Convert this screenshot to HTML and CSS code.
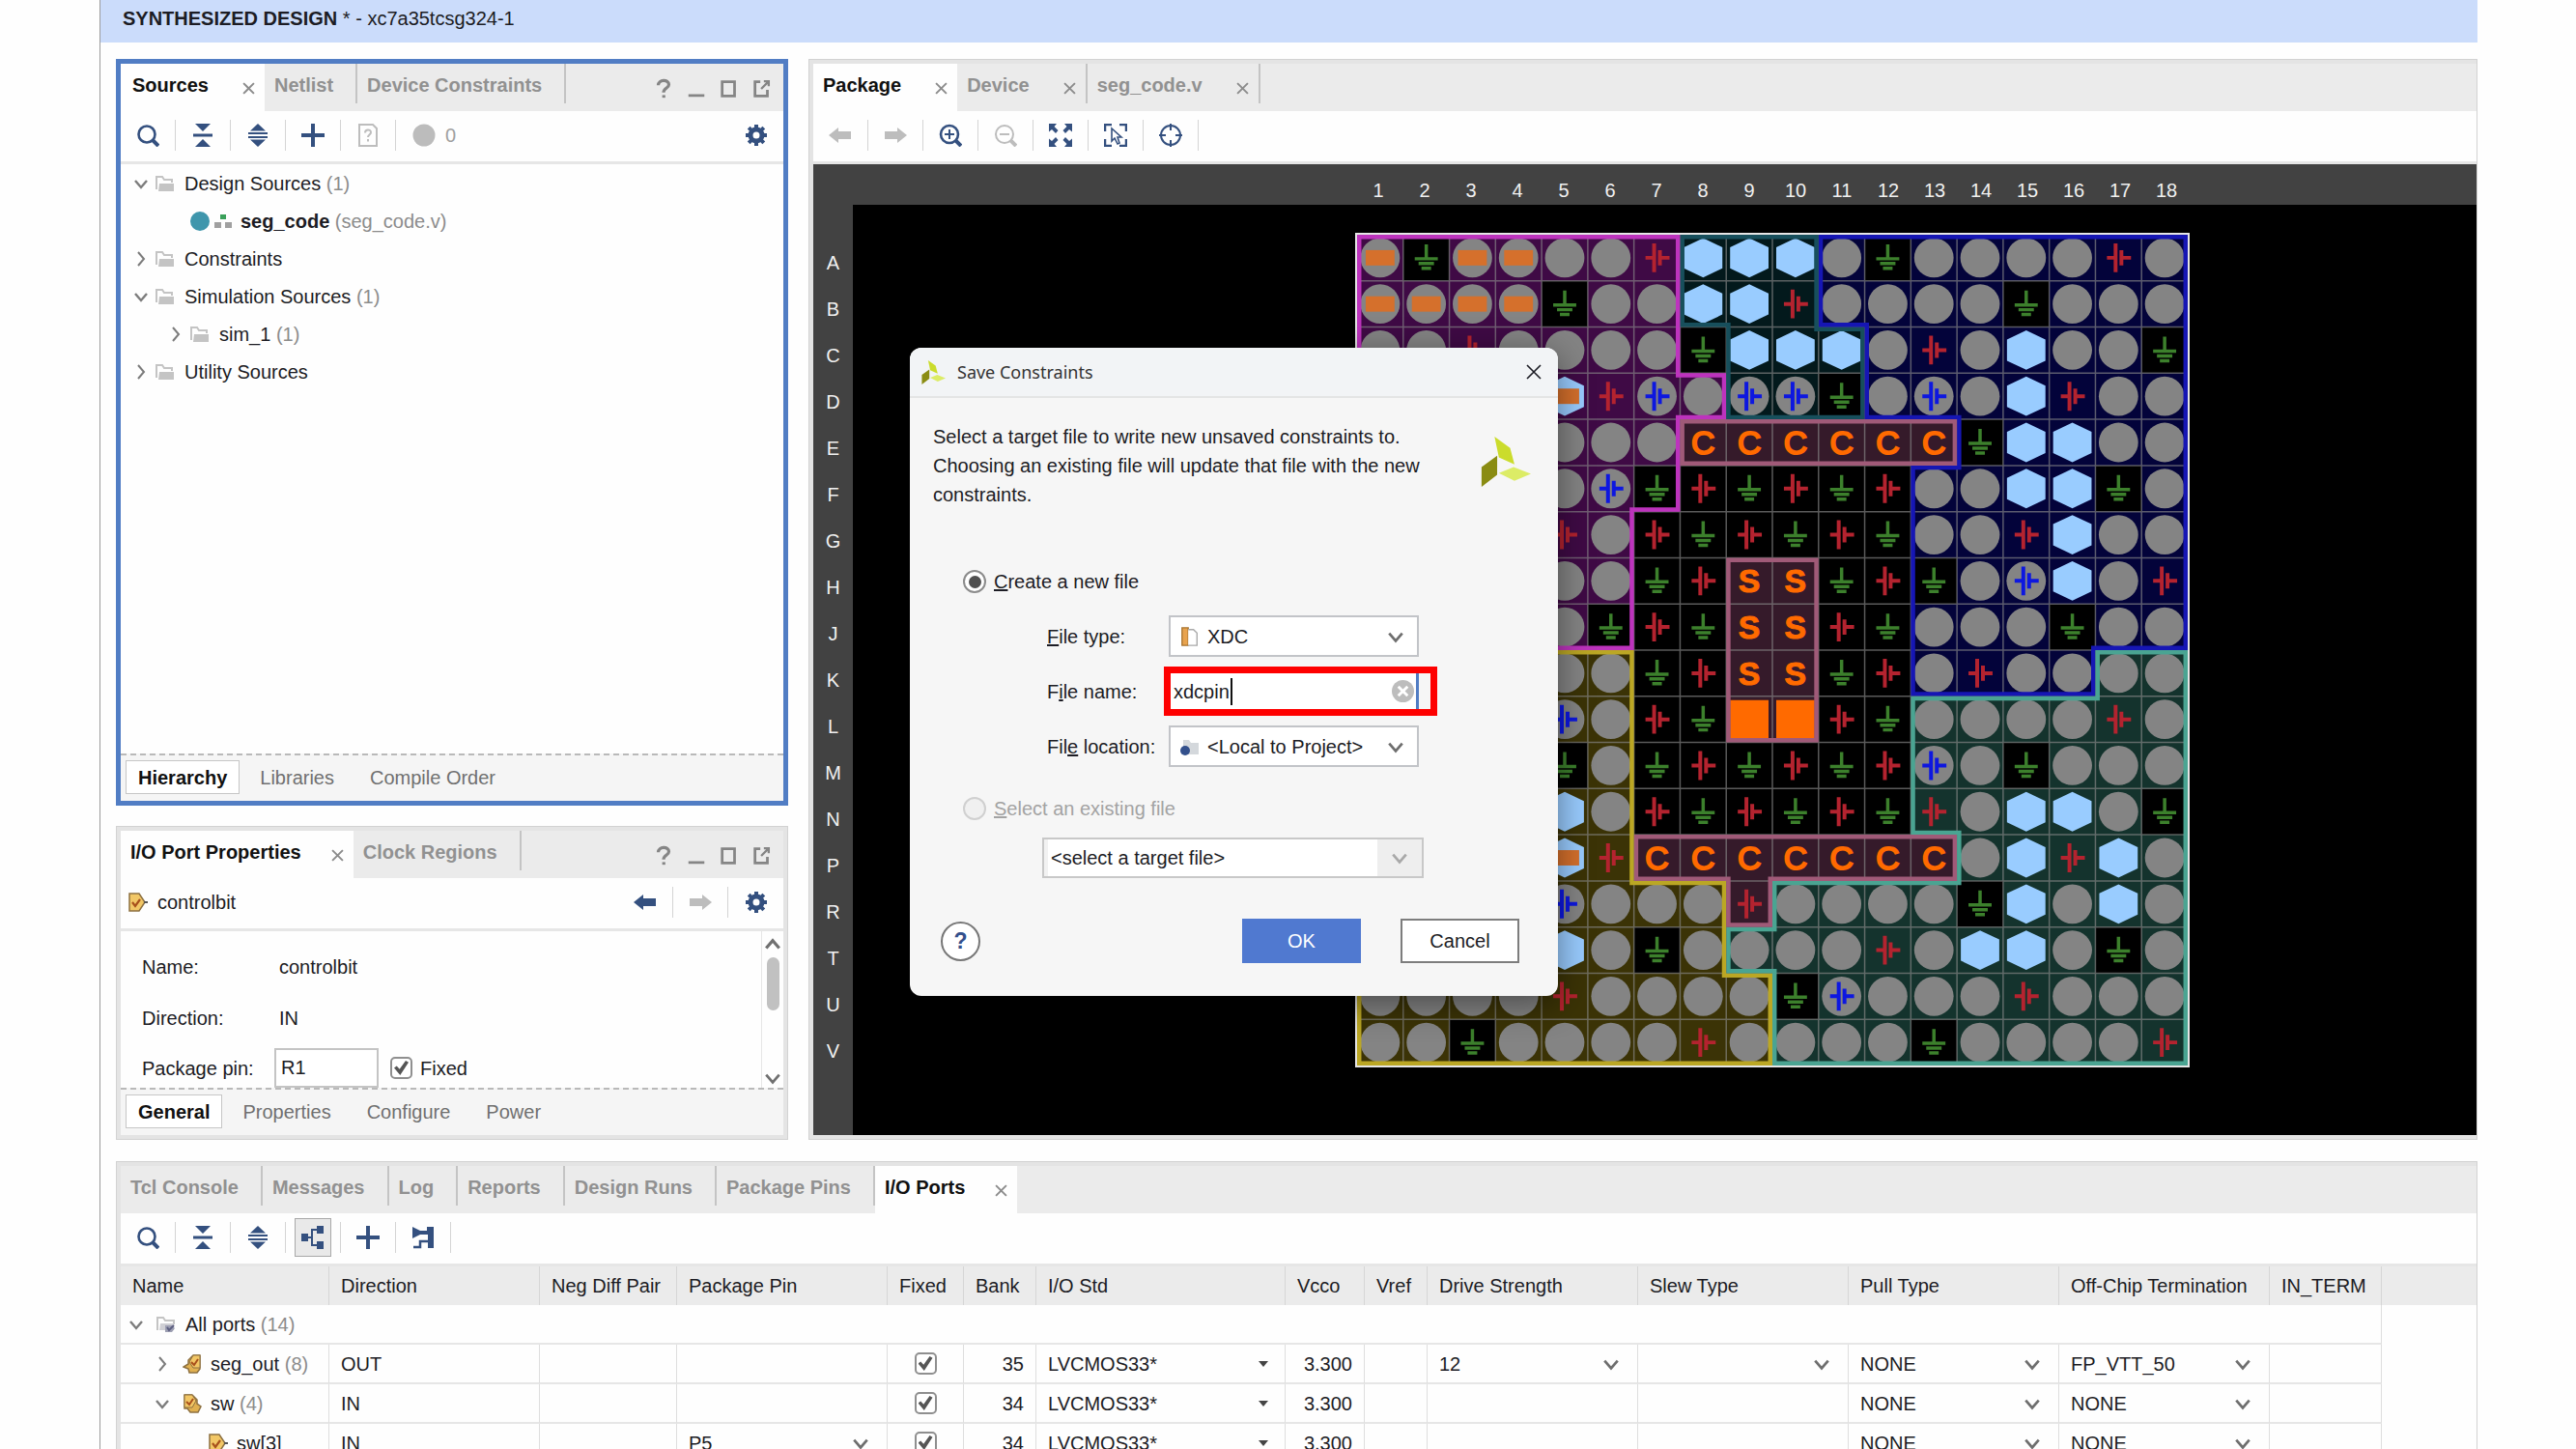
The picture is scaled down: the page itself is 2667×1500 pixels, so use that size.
FILE: index.html
```html
<!DOCTYPE html>
<html lang="en">
<head>
<meta charset="utf-8">
<title>Synthesized Design - xc7a35tcsg324-1</title>
<link rel="stylesheet" href="styles.css">
</head>
<body>
<svg class="sprite" aria-hidden="true">
  <symbol id="i-search" viewBox="0 0 24 24"><circle cx="11" cy="11" r="8.500" fill="none" stroke="currentColor" stroke-width="2.600"/><path d="M17 17l6 6" stroke="currentColor" stroke-width="4"/></symbol>
  <symbol id="i-collapse" viewBox="0 0 24 24"><path d="M4 0h16l-8 8zM4 24h16l-8-8zM2 10.500h20v3H2z" fill="currentColor"/></symbol>
  <symbol id="i-expand" viewBox="0 0 24 24"><path d="M4 7.500h16L12 0zM4 16.500h16L12 24zM2 9h20v2H2zM2 13h20v2H2z" fill="currentColor"/></symbol>
  <symbol id="i-plus" viewBox="0 0 24 24"><path d="M10 0h4v10h10v4H14v10h-4V14H0v-4h10z" fill="currentColor"/></symbol>
  <symbol id="i-doc" viewBox="0 0 24 24"><path d="M3 1h14l4 4v18H3z" fill="none" stroke="currentColor" stroke-width="2"/><path d="M9 9.500c0-4 6-4 6-.5 0 2.500-3 2.500-3 5M12 16v2.500" fill="none" stroke="currentColor" stroke-width="2"/></symbol>
  <symbol id="i-dot" viewBox="0 0 24 24"><circle cx="12" cy="12" r="11.500" fill="currentColor"/></symbol>
  <symbol id="i-gear" viewBox="0 0 24 24"><path d="M12 1v22M1 12h22M4.200 4.200l15.600 15.600M19.800 4.200L4.200 19.800" stroke="currentColor" stroke-width="4"/><circle cx="12" cy="12" r="6" fill="#fff" stroke="currentColor" stroke-width="5"/></symbol>
  <symbol id="i-left" viewBox="0 0 24 24"><path d="M0 12l10-8v4h13v8H10v4z" fill="currentColor"/></symbol>
  <symbol id="i-right" viewBox="0 0 24 24"><path d="M24 12L14 4v4H1v8h13v4z" fill="currentColor"/></symbol>
  <symbol id="i-zoomin" viewBox="0 0 24 24"><circle cx="11" cy="11" r="9" fill="none" stroke="currentColor" stroke-width="2.600"/><path d="M17 17l6 6" stroke="currentColor" stroke-width="4"/><path d="M6 11h10M11 6v10" stroke="currentColor" stroke-width="2"/></symbol>
  <symbol id="i-zoomout" viewBox="0 0 24 24"><circle cx="11" cy="11" r="9" fill="none" stroke="currentColor" stroke-width="2"/><path d="M17 17l6 6" stroke="currentColor" stroke-width="4"/><path d="M6 11h10" stroke="currentColor" stroke-width="2"/></symbol>
  <symbol id="i-fit" viewBox="0 0 24 24"><path d="M0 0h8L5.500 3l4 4-2.500 3-4-4L0 8.500zM24 0v8.500L21 6l-4 4-2.500-3 4-4L16 0zM0 24v-8.500L3 18l4-4 2.500 3-4 4L8 24zM24 24h-8l2.500-3-4-4 2.500-3 4 4 3-2.500z" fill="currentColor"/></symbol>
  <symbol id="i-fitsel" viewBox="0 0 24 24"><path d="M1 8V1h7M16 1h7v7M1 16v7h7M16 23h7v-7" fill="none" stroke="currentColor" stroke-width="2.500"/><path d="M8 5v13l3-3 3 6 2-1-2-6h4z" fill="none" stroke="currentColor" stroke-width="1.600"/></symbol>
  <symbol id="i-target" viewBox="0 0 24 24"><circle cx="12" cy="12" r="10" fill="none" stroke="currentColor" stroke-width="2"/><path d="M12 0v7M12 17v7M0 12h7M17 12h7" stroke="currentColor" stroke-width="2"/></symbol>
  <symbol id="i-tree" viewBox="0 0 24 24"><path d="M0 8h7v8H0zM16 0h7v8h-7zM16 16h7v8h-7z" fill="currentColor"/><path d="M7 12h4M16 4h-5v16h5" fill="none" stroke="currentColor" stroke-width="2"/></symbol>
  <symbol id="i-ports" viewBox="0 0 24 24"><path d="M1 1l8 4h7V1h7v22h-6V9H9l-8 4z" fill="currentColor"/><path d="M2 22h7v-6h8" fill="none" stroke="currentColor" stroke-width="2.500"/></symbol>
  <symbol id="i-help" viewBox="0 0 24 24"><path d="M6 8c0-7 12-7 12-1 0 4.500-6 4-6 9" fill="none" stroke="currentColor" stroke-width="3.500"/><path d="M10.500 19h3.500v3h-3.500z" fill="currentColor"/></symbol>
  <symbol id="i-min" viewBox="0 0 24 24"><path d="M3 18h18v3H3z" fill="currentColor"/></symbol>
  <symbol id="i-max" viewBox="0 0 24 24"><path d="M4 4h14v16H4z" fill="none" stroke="currentColor" stroke-width="3"/></symbol>
  <symbol id="i-float" viewBox="0 0 24 24"><path d="M10 4H4v16h14v-7" fill="none" stroke="currentColor" stroke-width="3"/><path d="M11 12l8-8M14 3.500h5.500V9" fill="none" stroke="currentColor" stroke-width="2.500"/></symbol>
  <symbol id="i-x" viewBox="0 0 12 12"><path d="M1 1l10 10M11 1L1 11" stroke="currentColor" stroke-width="1.800"/></symbol>
  <symbol id="i-close" viewBox="0 0 16 16"><path d="M1 1l14 14M15 1L1 15" stroke="currentColor" stroke-width="1.600"/></symbol>
  <symbol id="i-down" viewBox="0 0 16 16"><path d="M2 5l6 7 6-7" fill="none" stroke="currentColor" stroke-width="2.400"/></symbol>
  <symbol id="i-next" viewBox="0 0 16 16"><path d="M5 1l6 7-6 7" fill="none" stroke="currentColor" stroke-width="2"/></symbol>
  <symbol id="i-up" viewBox="0 0 16 16"><path d="M2 12l6-7 6 7" fill="none" stroke="currentColor" stroke-width="2.800"/></symbol>
  <symbol id="i-tri" viewBox="0 0 16 16"><path d="M3 5h10l-5 6z" fill="currentColor"/></symbol>
  <symbol id="i-folder" viewBox="0 0 20 18"><path d="M1 15V2h6l2 3h8v3" fill="none" stroke="#c4c4c4" stroke-width="2"/><path d="M4 9h15v8H3z" fill="#c4c4c4"/></symbol>
  <symbol id="i-folderports" viewBox="0 0 20 18"><path d="M1 15V2h6l2 3h9v4" fill="none" stroke="#c4c4c4" stroke-width="2"/><path d="M4 8h14v7H3z" fill="#cfcfd4"/><path d="M9 10h7l3 3-3 4H9z" fill="#9d9fb2"/><path d="M11 12l2 3 5-5" fill="none" stroke="#5c5e80" stroke-width="2"/></symbol>
  <symbol id="i-hier" viewBox="0 0 18 14"><path d="M6 0h6v5H6z" fill="#3aa05a"/><path d="M0 8h7v6H0zM11 8h7v6h-7z" fill="#a0a0a0"/></symbol>
  <symbol id="i-port" viewBox="0 0 20 20"><path d="M1 1h10l6 9-6 9H1z" fill="#f2c766" stroke="#8d7040" stroke-width="1.500"/><path d="M16 10h4" stroke="#555" stroke-width="2"/><path d="M4 10l3 4 5-7" fill="none" stroke="#a8501c" stroke-width="2.200"/></symbol>
  <symbol id="i-bus" viewBox="0 0 20 20"><path d="M2 1h8l5 5v4l4 3-3 6H8l-3-4H2z" fill="#e0b050" stroke="#8d7040" stroke-width="1.500"/><path d="M2 1h8l4 6-4 7H2z" fill="#f2c766" stroke="#8d7040"/><path d="M4 8l3 3 4-6" fill="none" stroke="#a8501c" stroke-width="2"/></symbol>
  <symbol id="i-busout" viewBox="0 0 20 20"><path d="M18 1h-7L6 6v4l-5 3 5 2 1 4h8l3-4z" fill="#e0b050" stroke="#8d7040" stroke-width="1.500"/><path d="M18 1h-7L7 8l4 6h7z" fill="#f2c766" stroke="#8d7040"/><path d="M9 8l3 3 4-6" fill="none" stroke="#a8501c" stroke-width="2"/></symbol>
  <symbol id="i-logo" viewBox="0 0 116 116"><path d="M32 0l36 26 10 38-36-16z" fill="#cbdc2c"/><path d="M2 70l36-26v44L2 116z" fill="#8a8c12"/><path d="M42 84l34-14 40 16-38 16z" fill="#dcec66"/></symbol>
</svg>

<div class="app">
  <header class="design-bar"><strong>SYNTHESIZED DESIGN</strong> * - xc7a35tcsg324-1</header>

  <main class="workspace">
    <div class="side">
      <section class="panel focused sources">
        <div class="tabs">
          <div class="tab active"><span>Sources</span><button class="x" aria-label="Close Sources"><svg><use href="#i-x"/></svg></button></div>
          <div class="tab">Netlist</div>
          <div class="tab">Device Constraints</div>
          <div class="controls">
            <button aria-label="Help"><svg><use href="#i-help"/></svg></button><button aria-label="Minimize"><svg><use href="#i-min"/></svg></button><button aria-label="Maximize"><svg><use href="#i-max"/></svg></button><button aria-label="Float"><svg><use href="#i-float"/></svg></button>
          </div>
        </div>
        <div class="tools">
          <button aria-label="Search"><svg><use href="#i-search"/></svg></button>
          <button aria-label="Collapse all"><svg><use href="#i-collapse"/></svg></button>
          <button aria-label="Expand all"><svg><use href="#i-expand"/></svg></button>
          <button aria-label="Add sources"><svg><use href="#i-plus"/></svg></button>
          <button class="off" aria-label="Missing sources"><svg><use href="#i-doc"/></svg></button>
          <span class="count"><svg><use href="#i-dot"/></svg>0</span>
          <button class="end" aria-label="Settings"><svg><use href="#i-gear"/></svg></button>
        </div>
        <ul class="tree">
          <li><svg class="arrow"><use href="#i-down"/></svg><svg class="folder"><use href="#i-folder"/></svg>Design Sources&nbsp;<i>(1)</i></li>
          <li class="leaf"><span class="module"></span><svg class="hier"><use href="#i-hier"/></svg><b>seg_code</b>&nbsp;<i>(seg_code.v)</i></li>
          <li><svg class="arrow"><use href="#i-next"/></svg><svg class="folder"><use href="#i-folder"/></svg>Constraints</li>
          <li><svg class="arrow"><use href="#i-down"/></svg><svg class="folder"><use href="#i-folder"/></svg>Simulation Sources&nbsp;<i>(1)</i></li>
          <li class="child"><svg class="arrow"><use href="#i-next"/></svg><svg class="folder"><use href="#i-folder"/></svg>sim_1&nbsp;<i>(1)</i></li>
          <li><svg class="arrow"><use href="#i-next"/></svg><svg class="folder"><use href="#i-folder"/></svg>Utility Sources</li>
        </ul>
        <div class="views"><button class="on">Hierarchy</button><button>Libraries</button><button>Compile Order</button></div>
      </section>

      <section class="panel props">
        <div class="tabs">
          <div class="tab active"><span>I/O Port Properties</span><button class="x" aria-label="Close I/O Port Properties"><svg><use href="#i-x"/></svg></button></div>
          <div class="tab">Clock Regions</div>
          <div class="controls">
            <button aria-label="Help"><svg><use href="#i-help"/></svg></button><button aria-label="Minimize"><svg><use href="#i-min"/></svg></button><button aria-label="Maximize"><svg><use href="#i-max"/></svg></button><button aria-label="Float"><svg><use href="#i-float"/></svg></button>
          </div>
        </div>
        <div class="tools">
          <span class="object"><svg><use href="#i-port"/></svg>controlbit</span>
          <button class="end" aria-label="Back"><svg><use href="#i-left"/></svg></button>
          <button class="off" aria-label="Forward"><svg><use href="#i-right"/></svg></button>
          <button class="last" aria-label="Settings"><svg><use href="#i-gear"/></svg></button>
        </div>
        <div class="prop-body">
          <div class="prop-grid">
            <span>Name:</span><span class="value">controlbit</span>
            <span>Direction:</span><span class="value">IN</span>
            <label for="pin">Package pin:</label>
            <div class="pin-row"><input id="pin" class="pin" type="text" value="R1"><input id="fixed" class="check" type="checkbox" checked><label for="fixed">Fixed</label></div>
          </div>
          <div class="scroll"><svg><use href="#i-up"/></svg><div class="thumb"></div><svg><use href="#i-down"/></svg></div>
        </div>
        <div class="views"><button class="on">General</button><button>Properties</button><button>Configure</button><button>Power</button></div>
      </section>
    </div>

    <section class="panel open package">
      <div class="tabs">
        <div class="tab active"><span>Package</span><button class="x" aria-label="Close Package"><svg><use href="#i-x"/></svg></button></div>
        <div class="tab closable"><span>Device</span><button class="x" aria-label="Close Device"><svg><use href="#i-x"/></svg></button></div>
        <div class="tab closable"><span>seg_code.v</span><button class="x" aria-label="Close seg_code.v"><svg><use href="#i-x"/></svg></button></div>
      </div>
      <div class="tools">
        <button class="off" aria-label="Back"><svg><use href="#i-left"/></svg></button>
        <button class="off" aria-label="Forward"><svg><use href="#i-right"/></svg></button>
        <button aria-label="Zoom in"><svg><use href="#i-zoomin"/></svg></button>
        <button class="off" aria-label="Zoom out"><svg><use href="#i-zoomout"/></svg></button>
        <button aria-label="Zoom fit"><svg><use href="#i-fit"/></svg></button>
        <button aria-label="Select area"><svg><use href="#i-fitsel"/></svg></button>
        <button aria-label="Autofit selection"><svg><use href="#i-target"/></svg></button>
      </div>
      <div class="canvas">
        <div class="ruler-x" id="cols"></div>
        <div class="ruler-y" id="rows"></div>
        <div class="stage"><svg id="chip" class="chip" viewBox="-2 -2 868 868"></svg></div>
      </div>
    </section>
  </main>

  <section class="panel open ports">
    <div class="tabs">
      <div class="tab">Tcl Console</div><div class="tab">Messages</div><div class="tab">Log</div><div class="tab">Reports</div><div class="tab">Design Runs</div><div class="tab">Package Pins</div>
      <div class="tab active"><span>I/O Ports</span><button class="x" aria-label="Close I/O Ports"><svg><use href="#i-x"/></svg></button></div>
    </div>
    <div class="tools">
      <button aria-label="Search"><svg><use href="#i-search"/></svg></button>
      <button aria-label="Collapse all"><svg><use href="#i-collapse"/></svg></button>
      <button aria-label="Expand all"><svg><use href="#i-expand"/></svg></button>
      <button class="pressed" aria-label="Group by interface and bus"><svg><use href="#i-tree"/></svg></button>
      <button aria-label="Create port"><svg><use href="#i-plus"/></svg></button>
      <button aria-label="Schematic"><svg><use href="#i-ports"/></svg></button>
    </div>
    <table>
      <colgroup><col class="w216"><col class="w218"><col class="w142"><col class="w218"><col class="w79"><col class="w75"><col class="w258"><col class="w82"><col class="w65"><col class="w218"><col class="w218"><col class="w218"><col class="w218"><col class="w116"><col></colgroup>
      <thead><tr><th>Name</th><th>Direction</th><th>Neg Diff Pair</th><th>Package Pin</th><th>Fixed</th><th>Bank</th><th>I/O Std</th><th>Vcco</th><th>Vref</th><th>Drive Strength</th><th>Slew Type</th><th>Pull Type</th><th>Off-Chip Termination</th><th>IN_TERM</th><th class="rest"></th></tr></thead>
      <tbody>
        <tr><td colspan="14"><div class="name"><svg class="arrow"><use href="#i-down"/></svg><svg class="folder"><use href="#i-folderports"/></svg>All ports&nbsp;<i>(14)</i></div></td><td class="rest"></td></tr>
        <tr><td><div class="name l1"><svg class="arrow"><use href="#i-next"/></svg><svg class="port"><use href="#i-busout"/></svg>seg_out&nbsp;<i>(8)</i></div></td><td>OUT</td><td></td><td></td><td class="mid"><input class="check" type="checkbox" checked aria-label="Fixed seg_out"></td><td class="num">35</td><td><div class="pick tri"><select aria-label="I/O standard"><option>LVCMOS33*</option></select><svg><use href="#i-tri"/></svg></div></td><td class="num">3.300</td><td></td><td><div class="pick"><select aria-label="Drive strength"><option>12</option></select><svg><use href="#i-down"/></svg></div></td><td><div class="pick"><select aria-label="Slew type"><option></option></select><svg><use href="#i-down"/></svg></div></td><td><div class="pick"><select aria-label="Pull type"><option>NONE</option></select><svg><use href="#i-down"/></svg></div></td><td><div class="pick"><select aria-label="Off-chip termination"><option>FP_VTT_50</option></select><svg><use href="#i-down"/></svg></div></td><td></td><td class="rest"></td></tr>
        <tr><td><div class="name l1"><svg class="arrow"><use href="#i-down"/></svg><svg class="port"><use href="#i-bus"/></svg>sw&nbsp;<i>(4)</i></div></td><td>IN</td><td></td><td></td><td class="mid"><input class="check" type="checkbox" checked aria-label="Fixed sw"></td><td class="num">34</td><td><div class="pick tri"><select aria-label="I/O standard"><option>LVCMOS33*</option></select><svg><use href="#i-tri"/></svg></div></td><td class="num">3.300</td><td></td><td></td><td></td><td><div class="pick"><select aria-label="Pull type"><option>NONE</option></select><svg><use href="#i-down"/></svg></div></td><td><div class="pick"><select aria-label="Off-chip termination"><option>NONE</option></select><svg><use href="#i-down"/></svg></div></td><td></td><td class="rest"></td></tr>
        <tr><td><div class="name l2"><svg class="port"><use href="#i-port"/></svg>sw[3]</div></td><td>IN</td><td></td><td><div class="pick"><select aria-label="Package pin"><option>P5</option></select><svg><use href="#i-down"/></svg></div></td><td class="mid"><input class="check" type="checkbox" checked aria-label="Fixed sw[3]"></td><td class="num">34</td><td><div class="pick tri"><select aria-label="I/O standard"><option>LVCMOS33*</option></select><svg><use href="#i-tri"/></svg></div></td><td class="num">3.300</td><td></td><td></td><td></td><td><div class="pick"><select aria-label="Pull type"><option>NONE</option></select><svg><use href="#i-down"/></svg></div></td><td><div class="pick"><select aria-label="Off-chip termination"><option>NONE</option></select><svg><use href="#i-down"/></svg></div></td><td></td><td class="rest"></td></tr>
      </tbody>
    </table>
  </section>
</div>

<div class="dialog" role="dialog" aria-labelledby="dlg-title">
  <div class="dlg-head"><svg><use href="#i-logo"/></svg><span id="dlg-title">Save Constraints</span><button aria-label="Close"><svg><use href="#i-close"/></svg></button></div>
  <form class="dlg-body">
    <div class="intro"><p>Select a target file to write new unsaved constraints to. Choosing an existing file will update that file with the new constraints.</p><svg><use href="#i-logo"/></svg></div>
    <div class="choice"><input type="radio" name="target" id="new" checked><label for="new"><u>C</u>reate a new file</label></div>
    <div class="fields">
      <label for="ftype"><u>F</u>ile type:</label>
      <div class="combo"><svg class="ficon" viewBox="0 0 20 22"><path d="M1 1h7v20H1z" fill="#e8a34e" stroke="#a87430" stroke-width="1.500"/><path d="M8 3h6l4 4v14H8" fill="#fff" stroke="#a9a9a9" stroke-width="1.500"/></svg><select id="ftype"><option>XDC</option></select><svg class="drop"><use href="#i-down"/></svg></div>
      <label for="fname">F<u>i</u>le name:</label>
      <div class="combo editing"><input id="fname" type="text" value="xdcpin"><span class="caret"></span><button type="button" class="clear" aria-label="Clear"><svg viewBox="0 0 24 24"><circle cx="12" cy="12" r="12" fill="#bdbdbd"/><path d="M7 7l10 10M17 7L7 17" stroke="#fff" stroke-width="3"/></svg></button></div>
      <label for="floc">Fil<u>e</u> location:</label>
      <div class="combo"><svg class="ficon" viewBox="0 0 20 20"><path d="M3 3h6l2 3h8v12H3z" fill="#d4d8dc"/><circle cx="5" cy="14" r="5" fill="#33508c"/></svg><select id="floc"><option>&lt;Local to Project&gt;</option></select><svg class="drop"><use href="#i-down"/></svg></div>
    </div>
    <div class="choice dim"><input type="radio" name="target" id="old" disabled><label for="old"><u>S</u>elect an existing file</label></div>
    <div class="existing"><select aria-label="Existing file" disabled><option>&lt;select a target file&gt;</option></select><span class="drop-cell"><svg><use href="#i-down"/></svg></span></div>
    <div class="dlg-foot"><button type="button" class="help">?</button><button type="button" class="ok">OK</button><button type="button" class="cancel">Cancel</button></div>
  </form>
</div>
<script src="chip.js"></script>
</body>
</html>
```
FILE: styles.css
```css
* { box-sizing: border-box; }
html, body { height: 100%; margin: 0; overflow: hidden; background: #fefefe; }
body, button, input, select { font-family: "Liberation Sans", Arial, sans-serif; font-size: 20px; line-height: 24px; color: #1c1c24; }
button, input, select { border: 0; padding: 0; margin: 0; background: none; }
i { font-style: normal; color: #8c8c8c; }
.sprite { position: absolute; width: 0; height: 0; }

.app { margin: 0 102px 0 103px; border-left: 1px solid #9a9a9a; min-height: 100%; }
.design-bar { height: 44px; padding: 7px 23px; background: #cbdcfb; }
.workspace { display: grid; grid-template-columns: 696px minmax(0, 1fr); gap: 21px; padding: 17px 0 22px 16px; }
.side { display: flex; flex-direction: column; gap: 21px; }

.panel { display: flex; flex-direction: column; border: 5px solid #e4e4e4; outline: 1px solid #d2d2d2; outline-offset: -1px; background: #fefefe; }
.panel.open { border-right: 0; }
.panel.focused { border-color: #517dc4; outline: 0; }
.sources { flex: 1; }
.ports { margin-left: 16px; }

.tabs { display: flex; align-items: flex-start; height: 49px; background: #ebebeb; }
.tab { height: 41px; padding: 10px 23px 0 10px; border-right: 2px solid #c4c4c4; font-weight: bold; color: #919191; white-space: nowrap; }
.tab.active, .tab.closable { display: flex; justify-content: space-between; gap: 35px; padding-right: 10px; }
.tab.active { height: 49px; border-right: 0; background: #fefefe; color: #111; }
.props .tab.active, .ports .tab.active { gap: 31px; }
.sources .tab.active { padding-left: 12px; }
.x { height: 14px; width: 13px; margin-top: 8px; color: #8c8c8c; }
.x svg { display: block; width: 13px; height: 13px; }
.controls { display: flex; margin: 14px 5px 0 auto; }
.controls button { width: 34px; height: 24px; color: #858585; }
.controls svg { display: block; width: 22px; height: 22px; margin: 0 auto; }

.tools { display: flex; align-items: center; height: 55px; padding-bottom: 2px; border-bottom: 3px solid #e6e6e6; }
.tools button { display: flex; align-items: center; justify-content: center; width: 57px; height: 32px; border-right: 1px solid #d4d4d4; color: #34507f; }
.tools svg { width: 24px; height: 24px; }
.tools button.off { color: #bdbdbd; }
.tools .end { margin-left: auto; }
.sources .tools .end, .tools .last { border-right: 0; }
.count { display: flex; align-items: center; gap: 10px; padding-left: 17px; color: #a0a0a0; }
.count svg { color: #bcbcbc; }
.object { display: flex; align-items: center; gap: 10px; padding-left: 8px; }
.object svg { width: 20px; height: 20px; }
.tools .pressed { position: relative; }
.tools .pressed::before { content: ""; position: absolute; inset: -4px 9px -4px 9px; border: 1px solid #a8a8a8; background: #e9e9e9; }
.tools .pressed svg { position: relative; }

.tree { flex: 1; margin: 0; padding: 0 0 0 13px; list-style: none; }
.tree li { display: flex; align-items: center; height: 39px; }
.tree .leaf { padding-left: 59px; }
.tree .child { padding-left: 36px; }
.arrow { width: 16px; height: 16px; margin-right: 7px; color: #7c7c7c; }
.folder { width: 20px; height: 18px; margin-right: 10px; }
.module { width: 20px; height: 20px; border-radius: 50%; background: #3f96ac; margin-right: 5px; }
.hier { width: 18px; height: 14px; margin-right: 9px; }

.views { display: flex; height: 49px; padding: 5px; border-top: 2px dashed #b9b9b9; background: #f5f5f5; }
.views button { height: 35px; padding: 0 12px; margin-right: 11px; border: 1px solid transparent; color: #707070; }
.views button.on { margin-right: 8px; border-color: #c6c6c6; background: #fff; color: #111; font-weight: bold; }

.prop-body { display: flex; height: 162px; overflow: hidden; }
.prop-grid { flex: 1; display: grid; grid-template-columns: 137px 1fr; grid-template-rows: 53px 53px 51px; align-items: center; padding: 10px 0 0 22px; }
.value { padding-left: 5px; }
.pin-row { display: flex; align-items: center; }
.pin { width: 108px; height: 41px; padding-left: 5px; border: 2px solid #c4c4c4; background: #fff; margin-right: 12px; }
.pin-row label { margin-left: 8px; }
.check { appearance: none; flex: none; width: 23px; height: 23px; border: 2px solid #8f8f8f; border-radius: 5px; background: #fff; display: inline-grid; place-items: center; }
.check:checked::before { content: ""; width: 15px; height: 15px; background: #555; clip-path: polygon(0 50%, 18% 36%, 38% 58%, 80% 0, 100% 12%, 42% 100%); }
.scroll { display: flex; flex-direction: column; align-items: center; width: 23px; padding: 4px 0 1px; border-left: 1px solid #e6e6e6; color: #707070; }
.scroll svg { width: 18px; height: 18px; }
.thumb { width: 13px; height: 55px; margin: 5px 0 auto; border-radius: 7px; background: #c1c1c1; }

.canvas { --chip-left: 520px; display: grid; grid-template-columns: 41px minmax(0, 1fr); grid-template-rows: 42px 963px; background: #424242; color: #f0f0f0; overflow: hidden; }
.ruler-x { grid-column: 2; display: grid; grid-template-columns: repeat(18, 48px); padding-left: var(--chip-left); align-items: center; text-align: center; padding-top: 12px; }
.ruler-y { display: grid; grid-template-rows: repeat(18, 48px); padding-top: 36px; align-items: center; text-align: center; }
.stage { background: #000; padding: 29px 0 0 var(--chip-left); }
.chip { display: block; width: 864px; height: 864px; }
.chip text { text-anchor: middle; fill: #ff6a00; font-size: 34px; }
.chip .c { stroke: #ff6a00; stroke-width: 2; }
.chip .s { font-weight: bold; stroke: #ff6a00; stroke-width: 1; }

table { width: 100%; border-collapse: separate; border-spacing: 0; table-layout: fixed; }
th { height: 40px; padding: 0 0 0 12px; border-right: 1px solid #d6d6d6; background: #ebebeb; font-weight: normal; text-align: left; white-space: nowrap; }
td { height: 41px; padding: 0 0 0 12px; border-right: 1px solid #dedede; border-bottom: 2px solid #e6e6e6; white-space: nowrap; }
th.rest { border-right: 0; }
td.rest { border: 0; }
.num { text-align: right; padding: 0 12px 0 0; }
.mid { text-align: center; padding: 0; }
.mid .check { display: grid; margin: 0 auto; }
.name { display: flex; align-items: center; margin-left: -4px; }
.name .arrow { margin-right: 13px; }
.name.l1 { padding-left: 27px; }
.name.l2 { padding-left: 83px; }
.port { width: 20px; height: 20px; margin-right: 9px; }
.pick { display: grid; grid-template-columns: 1fr 36px; align-items: center; }
.pick select { grid-area: 1 / 1 / 2 / 3; width: 100%; height: 30px; appearance: none; }
.pick svg { grid-area: 1 / 2; width: 18px; height: 18px; color: #6e6e6e; pointer-events: none; }
.pick.tri svg { width: 16px; height: 16px; margin-left: 6px; color: #444; }
.w216 { width: 216px; } .w218 { width: 218px; } .w142 { width: 142px; } .w79 { width: 79px; } .w75 { width: 75px; }
.w258 { width: 258px; } .w82 { width: 82px; } .w65 { width: 65px; } .w116 { width: 116px; }

.dialog { position: absolute; left: 942px; top: 360px; width: 671px; border-radius: 12px; background: #f6f6f6; overflow: hidden; box-shadow: 0 8px 36px rgba(0, 0, 0, .45); }
.dlg-head { display: flex; align-items: center; height: 52px; padding: 0 17px 0 12px; border-bottom: 2px solid #e4e5e5; background: #f2f4f6; font: 18px/24px "Noto Sans", sans-serif; color: #333; }
.dlg-head svg { width: 25px; height: 25px; margin-right: 12px; }
.dlg-head button { margin-left: auto; height: 16px; }
.dlg-head button svg { display: block; width: 16px; height: 16px; margin: 0; }
.dlg-body { padding: 25px 40px 34px 24px; }
.intro { display: flex; justify-content: space-between; line-height: 30px; margin-bottom: 60px; }
.intro p { width: 515px; margin: 0; }
.intro svg { width: 52px; height: 52px; margin: 15px -12px 0 0; }
.choice { display: flex; align-items: center; gap: 8px; height: 30px; padding-left: 31px; }
.choice input { appearance: none; width: 24px; height: 24px; border: 2px solid #8c8c8c; border-radius: 50%; background: #fff; display: grid; place-items: center; }
.choice input:checked::before { content: ""; width: 13px; height: 13px; border-radius: 50%; background: #505050; }
.choice.dim { color: #a3a3a3; }
.choice.dim input { border-color: #d0d0d0; background: #f0f0f0; }
.fields { display: grid; grid-template-columns: 126px 259px; grid-auto-rows: 43px; row-gap: 14px; align-items: center; margin: 20px 0 28px 118px; }
.combo { position: relative; display: flex; align-items: center; height: 43px; padding: 0 14px 0 10px; border: 2px solid #c2c4c8; background: #fff; }
.combo select { flex: 1; appearance: none; }
.ficon { width: 20px; height: 20px; margin-right: 8px; }
.drop { width: 18px; height: 18px; color: #6e6e6e; margin-right: -1px; }
.combo.editing { padding: 0 2px 0 3px; border-color: #517dc4; border-right-width: 3px; }
.combo.editing::after { content: ""; position: absolute; inset: -6px -22px -6px -7px; border: 7px solid #fe0000; pointer-events: none; }
.editing input { width: 59px; }
.caret { width: 2px; height: 28px; background: #111; }
.clear { width: 23px; height: 23px; margin-left: auto; }
.clear svg { display: block; }
.existing { display: flex; width: 395px; height: 42px; margin: 15px 0 42px 113px; border: 2px solid #c8c8c8; background: #f2f2f2; padding-left: 4px; }
.existing select { flex: 1; appearance: none; padding-left: 3px; background: #fff; opacity: 1; color: #1c1c24; }
.drop-cell { display: grid; place-items: center; width: 46px; background: #eee; }
.drop-cell svg { width: 18px; height: 18px; color: #a8a8a8; }
.dlg-foot { display: flex; align-items: center; gap: 41px; }
.help { width: 41px; height: 41px; margin: 0 auto 0 8px; border: 2px solid #777; border-radius: 50%; background: #fff; color: #34508c; font-weight: bold; font-size: 23px; }
.ok, .cancel { width: 123px; height: 46px; }
.ok { background: #5079d0; color: #fff; }
.cancel { border: 2px solid #7d7d7d; background: #fff; }
```
FILE: chip.js
```js
// Package view: one character per ball.
// o/g user pins, n ground, r/b supplies, h/x clock-capable, C/S/Q configuration
const ROWS = 'ABCDEFGHJKLMNPRTUV';
const BALLS = [
  'onooggrhhhgnggggrg', 'oooongghhrggggnggg', 'ggrggggnhhhgrghggn', 'ggggxrbgbbngbghrgg',
  'gggggggCCCCCCnhhgg', 'gggggbnrnrnrgghhng', 'ggggrgrnrnrnggrhgg', 'ggggggnrSSnrngbhgr',
  'gggggnrnSSrngggngg', 'ggggggnrSSnrgrgggg', 'ggggbgrnQQrnggggrg', 'ggggngnrnrnrbgnggg',
  'gggghgrnrnrnrghhgn', 'ggggxrCCCCCCCghrhg', 'ggggbgggrggggnhghg', 'gggghgnggggrghhgng',
  'ggggrggggnbgggrggg', 'ggnggggrggggnggggr'
];
// Bank outlines in ball units: [fill, outline, points]
const BANKS = [
  ['#3f0a45', '#bd33bd', '0,0 7,0 7,3 8,3 8,4 7,4 7,6 6,6 6,9 0,9'],
  ['#03191c', '#174f5c', '7,0 10,0 10,2 11,2 11,4 8,4 8,2 7,2'],
  ['#03033a', '#1616b4', '10,0 18,0 18,9 16,9 16,10 12,10 12,5 13,5 13,4 11,4 11,2 10,2'],
  ['#3b3306', '#bba724', '0,9 6,9 6,14 8,14 8,16 9,16 9,18 0,18'],
  ['#14332d', '#4aa492', '16,9 18,9 18,18 9,18 9,16 8,16 8,15 9,15 9,14 13,14 13,13 12,13 12,10 16,10'],
  ['#351a2a', '#a05a78', '7,4 13,4 13,5 7,5'],
  ['#351a2a', '#a05a78', '8,7 10,7 10,11 8,11'],
  ['#351a2a', '#a05a78', '6,13 13,13 13,14 9,14 9,15 8,15 8,14 6,14']
];
const P = 48;
const pts = s => s.split(' ').map(p => p.split(',').map(v => v * P).join(',')).join(' ');
const circle = '<circle r="20.500" fill="#848484"/>';
const hexagon = '<path d="M0-20.500L20-11V11L0 20.500L-20 11V-11z" fill="#99ccff"/>';
const bar = '<path d="M-15-8h30V8h-30z" fill="#d5702c"/>';
const supply = c => `<path d="M-12 0h10M3 0h10M-3-15v30M3-8v16" stroke="${c}" stroke-width="4" fill="none"/>`;
const SHAPES = {
  g: circle, o: circle + bar, h: hexagon, x: hexagon + bar,
  n: '<path d="M0-14V0M-12 1h24M-8 6h16M-5 11h10" stroke="#3c802c" stroke-width="3.500" fill="none"/>',
  r: supply('#b4232f'), b: circle + supply('#0d17e0'),
  C: '<text class="c" y="12">C</text>', S: '<text class="s" y="12">S</text>',
  Q: '<path d="M-20-20h40v40h-40z" fill="#ff6a00"/>'
};
let out = '<rect width="864" height="864" fill="#000"/>';
BANKS.forEach(([fill, , p], i) => {
  out += `<clipPath id="bank${i}"><polygon points="${pts(p)}"/></clipPath><polygon points="${pts(p)}" fill="${fill}"/>`;
});
let lines = '', shapes = '';
BALLS.forEach((row, y) => [...row].forEach((ch, x) => {
  if (ch === 'n') out += `<rect x="${x * P}" y="${y * P}" width="${P}" height="${P}" fill="#000"/>`;
  shapes += `<g transform="translate(${x * P + P / 2} ${y * P + P / 2})">${SHAPES[ch]}</g>`;
}));
for (let i = 1; i < 18; i++) lines += `M${i * P} 0V864M0 ${i * P}H864`;
out += `<path d="${lines}" stroke="#8a8a8a" stroke-opacity=".65" stroke-width="1.500"/>` + shapes;
BANKS.forEach(([, stroke, p], i) => {
  out += `<polygon points="${pts(p)}" fill="none" stroke="${stroke}" stroke-width="9" clip-path="url(#bank${i})"/>`;
});
out += '<rect x="-1" y="-1" width="866" height="866" fill="none" stroke="#e6e6e6" stroke-width="2"/>';
document.getElementById('chip').innerHTML = out;
document.getElementById('cols').innerHTML = ROWS.split('').map((_, i) => `<span>${i + 1}</span>`).join('');
document.getElementById('rows').innerHTML = ROWS.split('').map(r => `<span>${r}</span>`).join('');
```
